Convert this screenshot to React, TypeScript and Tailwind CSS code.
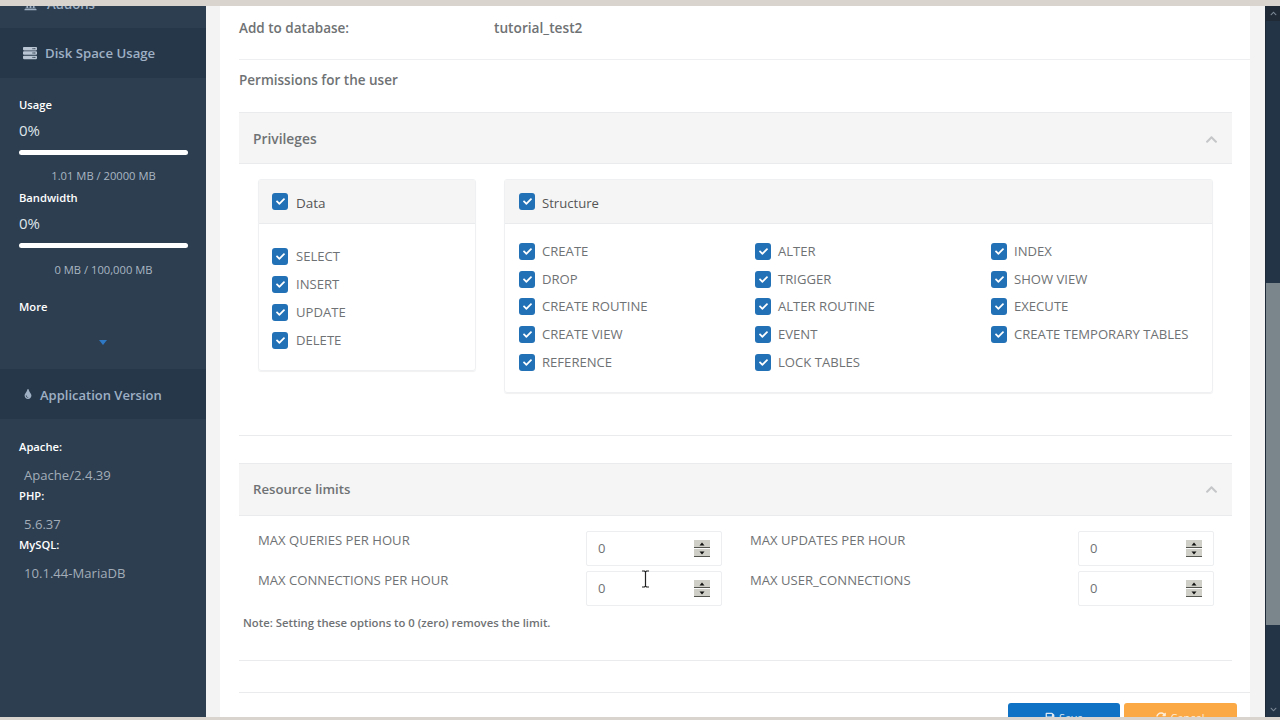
import { FaCheck, FaChevronUp, FaSave, FaServer, FaTint, FaUniversity, FaChevronDown, FaSyncAlt } from 'react-icons/fa';

const dataPerms = ['SELECT', 'INSERT', 'UPDATE', 'DELETE'];

const structurePerms = [
    ['CREATE', 'ALTER', 'INDEX'],
    ['DROP', 'TRIGGER', 'SHOW VIEW'],
    ['CREATE ROUTINE', 'ALTER ROUTINE', 'EXECUTE'],
    ['CREATE VIEW', 'EVENT', 'CREATE TEMPORARY TABLES'],
    ['REFERENCE', 'LOCK TABLES', ''],
];

function Check() {
    return (
        <span className="flex h-[17px] w-[16px] shrink-0 items-center justify-center rounded-[3px] bg-[#2270b5]">
            <FaCheck className="text-[9px] text-white" />
        </span>
    );
}

function CheckRow({ label, className }: { label: string; className: string }) {
    return (
        <div className={`flex items-center ${className}`}>
            <Check />
            <span className="text-[13.1px] leading-none text-[#6f7274]">{label}</span>
        </div>
    );
}

function Spinner() {
    return (
        <svg width="16" height="17" viewBox="0 0 16 17" className="shrink-0">
            <rect x="0" y="0" width="16" height="8" fill="#cfcfc7" />
            <rect x="0" y="9" width="16" height="8" fill="#cfcfc7" />
            <rect x="0" y="7" width="16" height="1" fill="#55554f" />
            <rect x="0" y="16" width="16" height="1" fill="#55554f" />
            <rect x="0" y="8" width="16" height="1" fill="#fafafa" />
            <path d="M8 2.5 L10.5 5.5 H5.5 Z" fill="#111" />
            <path d="M8 14.5 L5.5 11.5 H10.5 Z" fill="#111" />
        </svg>
    );
}

function NumberBox() {
    return (
        <div className="flex h-[35px] w-[136px] items-center justify-between rounded-[2px] border border-[#eceef0] bg-white pl-[11px] pr-[11px]">
            <span className="text-[13px] text-[#6f7274]">0</span>
            <Spinner />
        </div>
    );
}

function PanelHead({ title, className }: { title: string; className: string }) {
    return (
        <div className={`mr-[18px] flex items-center justify-between border-y border-[#e9ebec] bg-[#f5f5f5] pl-[14px] pr-[14px] ${className}`}>
            <span className="font-semibold text-[#6f7274]">{title}</span>
            <FaChevronUp className="text-[13px] text-[#c4c6c8]" />
        </div>
    );
}

function Usage({ title, used, className, usedGap }: { title: string; used: string; className: string; usedGap: string }) {
    return (
        <div className={`flex flex-col px-[19px] ${className}`}>
            <span className="text-[11.2px] font-semibold leading-[16px] text-white">{title}</span>
            <span className="mt-[6px] text-[15px] leading-[22px] text-[#dfe5ea]">0%</span>
            <div className="mt-[9px] h-[5px] w-[169px] rounded-full bg-white" />
            <span className={`w-[169px] text-center text-[11.2px] leading-[16px] text-[#aab6c2] ${usedGap}`}>{used}</span>
        </div>
    );
}

function Version({ name, value }: { name: string; value: string }) {
    return (
        <div className="flex flex-col px-[19px]">
            <span className="text-[11.2px] font-semibold leading-[16px] text-white">{name}</span>
            <span className="ml-[5px] mt-[10px] h-[23px] text-[13.1px] leading-[20px] text-[#a3adb8]">{value}</span>
        </div>
    );
}

export default function App() {
    return (
        <div className="relative flex h-[720px] w-[1280px] flex-col overflow-hidden bg-white font-['Open_Sans',sans-serif]">
            <div className="h-[6px] shrink-0 bg-[#d9d5ce]" />

            <div className="flex h-[711px] shrink-0">
                {/* Sidebar */}
                <aside className="flex w-[206px] shrink-0 flex-col overflow-hidden bg-[#2c3e50]">
                    <div className="flex h-[22px] shrink-0 items-center overflow-hidden pl-[24px] pr-[18px] text-[#9fb0c4]">
                        <div className="-mt-[24px] flex w-full items-center">
                            <FaUniversity className="text-[13px]" />
                            <span className="ml-[10px] text-[13.2px] font-semibold">Addons</span>
                            <FaChevronDown className="ml-auto text-[5px]" />
                        </div>
                    </div>
                    <div className="flex h-[50px] shrink-0 items-center bg-[#26374a] pl-[23px] text-[#9fb0c4]">
                        <FaServer className="text-[14px] text-[#b9c5d2]" />
                        <span className="ml-[8px] mt-[2px] text-[13.2px] font-semibold">Disk Space Usage</span>
                    </div>
                    <Usage title="Usage" used="1.01 MB / 20000 MB" className="mt-[19px]" usedGap="mt-[13px]" />
                    <Usage title="Bandwidth" used="0 MB / 100,000 MB" className="mt-[6px]" usedGap="mt-[14px]" />
                    <span className="mt-[21px] px-[19px] text-[11.2px] font-semibold leading-[16px] text-white">More</span>
                    <div className="mt-[25px] flex justify-center">
                        <span className="h-0 w-0 border-x-[4px] border-t-[5px] border-x-transparent border-t-[#2f78c4]" />
                    </div>
                    <div className="mt-[24px] flex h-[50px] shrink-0 items-center bg-[#26374a] pl-[23px] text-[#9fb0c4]">
                        <FaTint className="text-[10px]" />
                        <span className="ml-[7px] mt-[3px] text-[13px] font-semibold">Application Version</span>
                    </div>
                    <div className="mt-[20px] flex flex-col">
                        <Version name="Apache:" value="Apache/2.4.39" />
                        <Version name="PHP:" value="5.6.37" />
                        <Version name="MySQL:" value="10.1.44-MariaDB" />
                    </div>
                </aside>

                {/* Content */}
                <main className="flex flex-1 bg-[#f3f3f4] pl-[14px] pr-[15px]">
                    <div className="flex w-[1030px] flex-col overflow-hidden bg-white pl-[19px]">
                        <div className="flex h-[54px] shrink-0 items-center border-b border-[#eeeff0] pb-[8px] font-semibold text-[#6f7274]">
                            <span className="w-[255px] text-[13.5px]">Add to database:</span>
                            <span className="text-[13.7px]">tutorial_test2</span>
                        </div>

                        <div className="flex h-[52px] shrink-0 items-center pb-[12px] text-[13.5px] font-semibold text-[#6f7274]">
                            Permissions for the user
                        </div>

                        <PanelHead title="Privileges" className="h-[52px] shrink-0 pt-[2px] text-[13.8px]" />

                        <div className="ml-[19px] mt-[15px] flex h-[214px] shrink-0 items-start gap-[28px]">
                            <section className="h-[192px] w-[218px] rounded-[3px] border border-[#eef0f1] shadow-[0_1px_1px_rgba(0,0,0,0.06)]">
                                <div className="flex h-[44px] items-center gap-[8px] border-b border-[#e9ebec] bg-[#f5f5f5] pl-[13px]">
                                    <Check />
                                    <span className="mt-[3px] text-[13.5px] text-[#555]">Data</span>
                                </div>
                                <div className="pl-[13px] pt-[19px]">
                                    {dataPerms.map((p) => (
                                        <CheckRow key={p} label={p} className="h-[27.8px] gap-[8px]" />
                                    ))}
                                </div>
                            </section>

                            <section className="h-[214px] w-[709px] rounded-[3px] border border-[#eef0f1] shadow-[0_1px_1px_rgba(0,0,0,0.06)]">
                                <div className="flex h-[44px] items-center gap-[7px] border-b border-[#e9ebec] bg-[#f5f5f5] pl-[14px]">
                                    <Check />
                                    <span className="mt-[4px] text-[13.1px] text-[#555]">Structure</span>
                                </div>
                                <div className="pl-[14px] pt-[14px]">
                                    {structurePerms.map((row) => (
                                        <div key={row[0]} className="grid h-[27.6px] grid-cols-[236px_236px_1fr]">
                                            {row.map((p) =>
                                                p ? <CheckRow key={p} label={p} className="h-[27.6px] gap-[7px]" /> : <span key="empty" />,
                                            )}
                                        </div>
                                    ))}
                                </div>
                            </section>
                        </div>

                        <div className="mr-[18px] mt-[42px] h-px shrink-0 bg-[#e9ebec]" />

                        <PanelHead title="Resource limits" className="mt-[27px] h-[53px] shrink-0 text-[13.2px]" />

                        <div className="ml-[19px] mr-[18px] mt-[15px] flex flex-col gap-[5px] text-[13.1px] text-[#6f7274]">
                            <div className="flex h-[35px] items-start">
                                <span className="w-[328px]">MAX QUERIES PER HOUR</span>
                                <NumberBox />
                                <span className="ml-[28px] w-[328px]">MAX UPDATES PER HOUR</span>
                                <NumberBox />
                            </div>
                            <div className="flex h-[35px] items-start">
                                <span className="w-[328px]">MAX CONNECTIONS PER HOUR</span>
                                <NumberBox />
                                <span className="ml-[28px] w-[328px]">MAX USER_CONNECTIONS</span>
                                <NumberBox />
                            </div>
                        </div>

                        <p className="ml-[4px] mt-[9px] text-[11.3px] font-semibold leading-[16px] text-[#6f7274]">
                            Note: Setting these options to 0 (zero) removes the limit.
                        </p>

                        <div className="mr-[18px] mt-[29px] h-px shrink-0 bg-[#e9ebec]" />
                        <div className="mt-[31px] h-px shrink-0 bg-[#e9ebec]" />

                        <div className="mr-[13px] mt-[10px] flex shrink-0 justify-end gap-[4px]">
                            <button className="flex h-[34px] w-[112px] justify-center gap-[4px] rounded-[3px] bg-[#0f72c4] pt-[7px] text-[11px] text-[#dfe9f3]">
                                <FaSave className="mt-[2px] text-[10px]" />
                                Save
                            </button>
                            <button className="flex h-[34px] w-[113px] justify-center gap-[4px] rounded-[3px] bg-[#fba945] pt-[7px] text-[11px] text-[#fdecd6]">
                                <FaSyncAlt className="mt-[2px] text-[10px]" />
                                Cancel
                            </button>
                        </div>
                    </div>
                </main>

                {/* Scrollbar */}
                <div className="flex w-[15px] shrink-0 flex-col border-l border-[#1e2a38] bg-[#243447]">
                    <div className="flex h-[15px] items-center justify-center bg-[#1f2a36]">
                        <FaChevronUp className="text-[7px] text-[#7b8794]" />
                    </div>
                    <div className="mt-[262px] h-[342px] bg-[#7b868c]" />
                    <div className="mt-auto flex h-[15px] items-center justify-center">
                        <FaChevronDown className="text-[7px] text-[#7b8794]" />
                    </div>
                </div>
            </div>

            <div className="h-[3px] shrink-0 bg-[#d9d5ce]" />

            {/* Mouse cursor */}
            <svg width="9" height="18" viewBox="0 0 9 18" className="absolute left-[641px] top-[570px]">
                <path d="M1 1 H3.5 L4.5 2 L5.5 1 H8 M4.5 2 V16 M1 17 H3.5 L4.5 16 L5.5 17 H8" stroke="#222" strokeWidth="1.2" fill="none" />
            </svg>
        </div>
    );
}
